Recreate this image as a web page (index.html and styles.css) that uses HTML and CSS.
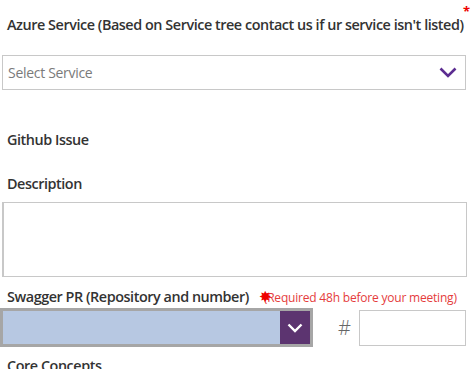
FILE: index.html
```html
<!DOCTYPE html>
<html lang="en">
<head>
    <meta charset="UTF-8">
    <title>Request form</title>
    <link rel="stylesheet" href="styles.css">
</head>
<body>
    <form class="request-form">
        <div class="field field-service">
            <span class="required-mark">*</span>
            <label class="field-label">Azure Service (Based on Service tree contact us if ur service isn't listed)</label>
            <div class="select-box">
                <span class="select-placeholder">Select Service</span>
                <svg class="chevron" width="18" height="11" viewBox="0 0 18 11">
                    <path d="M1.5 1.5 L9 9 L16.5 1.5" fill="none" stroke="#5c2d91" stroke-width="2.6"/>
                </svg>
            </div>
        </div>

        <div class="field field-github">
            <label class="field-label">Github Issue</label>
        </div>

        <div class="field field-description">
            <label class="field-label">Description</label>
            <div class="text-area"></div>
        </div>

        <div class="field field-swagger">
            <div class="label-row">
                <label class="field-label">Swagger PR (Repository and number)</label>
                <span class="note"><span class="note-star">✸</span>(Required 48h before your meeting)</span>
            </div>
            <div class="swagger-row">
                <div class="repo-select">
                    <span class="repo-button">
                        <svg width="16" height="10" viewBox="0 0 16 10">
                            <path d="M1.5 1.5 L8 8 L14.5 1.5" fill="none" stroke="#fff" stroke-width="2.4"/>
                        </svg>
                    </span>
                </div>
                <span class="hash">#</span>
                <div class="pr-number"></div>
            </div>
        </div>

        <div class="field field-concepts">
            <label class="field-label">Core Concepts</label>
        </div>
    </form>
</body>
</html>
```

FILE: styles.css
```css
* {
    margin: 0;
    padding: 0;
    box-sizing: border-box;
}

body {
    font-family: 'Open Sans', 'Liberation Sans', sans-serif;
    background: #fff;
    color: #333;
    width: 474px;
    height: 369px;
    overflow: hidden;
}

.request-form {
    display: flex;
    flex-direction: column;
}

.field {
    position: relative;
}

.field-label {
    display: block;
    font-size: 14.4px;
    font-weight: 600;
    letter-spacing: -0.45px;
    color: #333;
    padding-left: 7px;
    line-height: 20px;
    white-space: nowrap;
}

.required-mark {
    position: absolute;
    top: 5px;
    right: 4px;
    color: #e00;
    font-size: 13px;
    font-weight: 700;
    line-height: 13px;
}

.field-service {
    padding-top: 15px;
}

.select-box {
    margin: 20px 8px 0 2px;
    height: 35px;
    border: 1px solid #c8c8c8;
    display: flex;
    align-items: center;
    justify-content: space-between;
    padding: 0 8px 0 5px;
}

.select-placeholder {
    font-size: 14px;
    letter-spacing: -0.3px;
    color: #7a7a7a;
}

.field-github {
    margin-top: 40px;
}

.field-description {
    margin-top: 24px;
}

.text-area {
    margin: 8px 7px 0 2px;
    height: 75px;
    border: 1px solid #c8c8c8;
    border-left-width: 2px;
}

.field-swagger {
    margin-top: 10px;
}

.label-row {
    display: flex;
    align-items: baseline;
}

.note {
    color: #e53c3c;
    font-size: 12px;
    letter-spacing: -0.2px;
    margin-left: 15px;
    position: relative;
}

.note-star {
    position: absolute;
    left: -5px;
    top: 0px;
    color: #e00;
    font-size: 15px;
    line-height: 15px;
}

.swagger-row {
    display: flex;
    align-items: center;
    margin-top: 1px;
}

.repo-select {
    width: 313px;
    height: 39px;
    background: #b7c8e2;
    border: 3px solid #a6a6a6;
    display: flex;
    justify-content: flex-end;
}

.repo-button {
    width: 30px;
    background: #5c3470;
    display: flex;
    align-items: center;
    justify-content: center;
}

.hash {
    font-size: 20px;
    font-weight: 300;
    color: #666;
    margin-left: 25px;
}

.pr-number {
    width: 107px;
    height: 36px;
    border: 1px solid #c8c8c8;
    margin-left: 8px;
}

.field-concepts {
    margin-top: 9px;
}
```
